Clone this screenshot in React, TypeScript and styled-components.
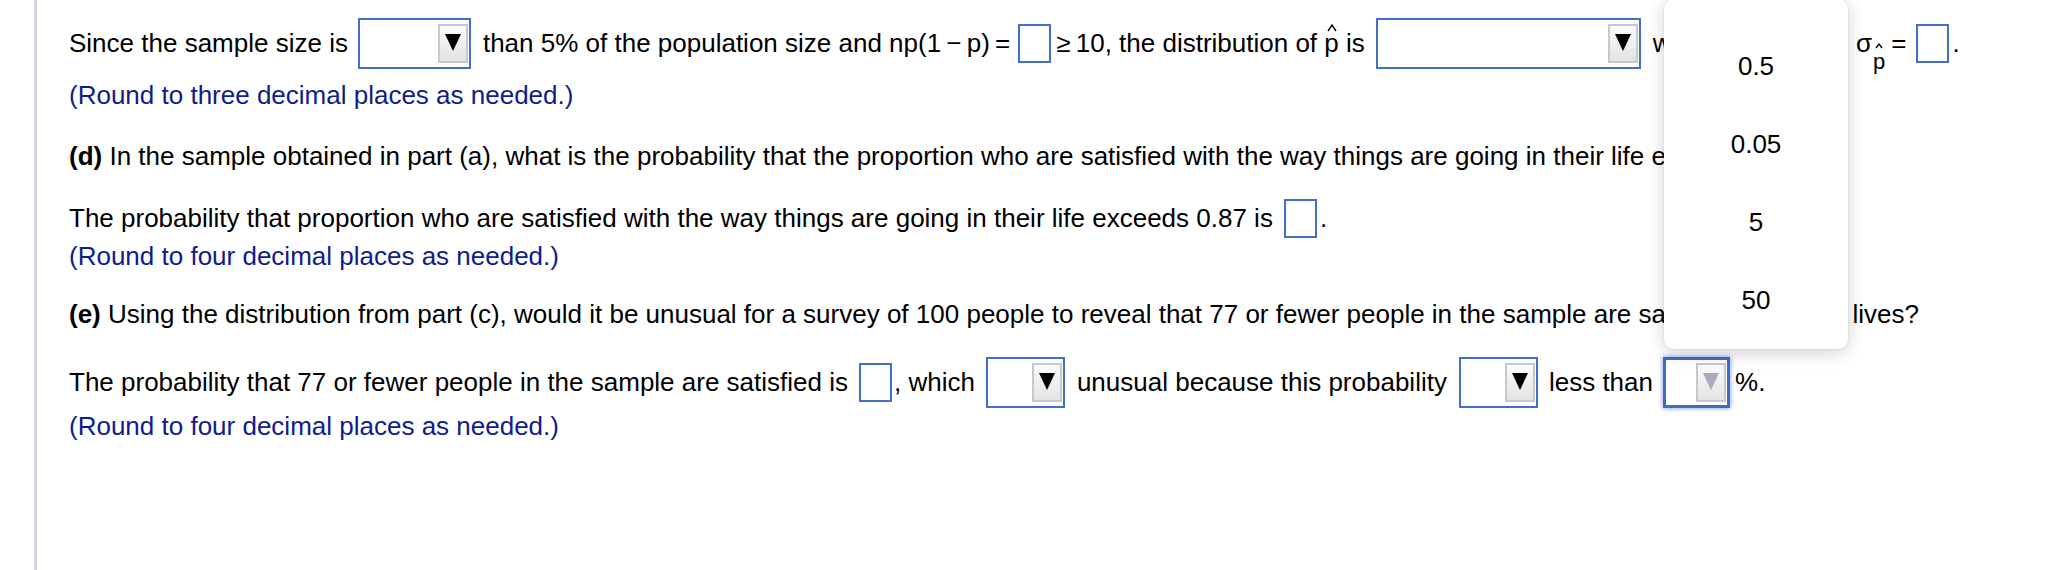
import * as React from 'react';
import styled, { createGlobalStyle } from 'styled-components';

const GlobalStyle = createGlobalStyle`
	html, body { margin: 0; padding: 0; background: #fff; }
	body {
		font-family: "Liberation Sans", Arial, Helvetica, sans-serif;
		font-size: 26px;
		color: #000;
	}
`;

const Page = styled.div`
	width: 2070px;
	height: 570px;
	overflow: hidden;
	padding-left: 34px;
	box-sizing: border-box;
`;

const Panel = styled.div`
	height: 100%;
	border-left: 3px solid #cfd3e2;
	padding: 18px 0 0 32px;
	box-sizing: border-box;
`;

const Row = styled.div<{ $mt: number; $h: number }>`
	display: flex;
	align-items: center;
	height: ${(p) => p.$h}px;
	margin-top: ${(p) => p.$mt}px;
	white-space: nowrap;
`;

const Line = styled.div<{ $mt: number }>`
	line-height: 30px;
	margin-top: ${(p) => p.$mt}px;
	white-space: nowrap;
`;

const Hint = styled(Line)`
	color: #0f1c8c;
`;

const Txt = styled.span``;

const Part = styled.b`
	font-weight: bold;
`;

const Box = styled.span<{ $ml: number; $mr: number }>`
	display: inline-block;
	flex: none;
	width: 33px;
	height: 39px;
	box-sizing: border-box;
	border: 2px solid #4270c8;
	margin: 0 ${(p) => p.$mr}px 0 ${(p) => p.$ml}px;
`;

const SelectBox = styled.span<{ $w: number; $ml: number; $mr: number; $focus?: boolean }>`
	position: relative;
	display: inline-flex;
	flex: none;
	align-items: center;
	justify-content: flex-end;
	box-sizing: border-box;
	width: ${(p) => p.$w}px;
	height: 51px;
	padding-right: 1px;
	background: #fff;
	border: ${(p) => (p.$focus ? '3px solid #3f6bc6' : '2px solid #4270c8')};
	box-shadow: ${(p) => (p.$focus ? '0 0 5px rgba(70, 110, 210, 0.75)' : 'none')};
	margin: 0 ${(p) => p.$mr}px 0 ${(p) => p.$ml}px;
`;

const SelectBtn = styled.span`
	display: flex;
	align-items: center;
	justify-content: center;
	width: 30px;
	height: 39px;
	box-sizing: border-box;
	border: 2px solid #c8c8c8;
	background: linear-gradient(#fbfbfb, #e3e3e3);
`;

const Arrow = styled.span<{ $dim?: boolean }>`
	width: 0;
	height: 0;
	margin-top: -3px;
	border-left: 8px solid transparent;
	border-right: 8px solid transparent;
	border-top: 17px solid ${(p) => (p.$dim ? '#a6abbf' : '#000')};
`;

const Popup = styled.div`
	position: absolute;
	left: -2px;
	bottom: calc(100% + 11px);
	width: 184px;
	padding: 28px 0 10px;
	background: #fff;
	border-radius: 10px;
	box-shadow: 0 4px 18px rgba(0, 0, 0, 0.18), 0 0 3px rgba(0, 0, 0, 0.08);
	z-index: 5;
`;

const Option = styled.div`
	display: flex;
	align-items: center;
	justify-content: center;
	height: 78px;
	font-size: 26px;
	color: #000;
`;

const Hidden = styled.span<{ $w: number }>`
	display: inline-block;
	flex: none;
	width: ${(p) => p.$w}px;
`;

const PHat = styled.span`
	position: relative;
	display: inline-block;
	svg {
		position: absolute;
		left: 50%;
		top: -4px;
		transform: translateX(-50%);
	}
`;

const SigmaGroup = styled.span`
	display: flex;
	align-self: stretch;
	align-items: flex-start;
`;

const Sigma = styled.span`
	margin-top: 11px;
	line-height: 29px;
`;

const SubStack = styled.span`
	display: flex;
	flex-direction: column;
	align-items: center;
	margin: 25px 0 0 1px;
	font-size: 22px;
	line-height: 22px;
	svg {
		margin-bottom: 2px;
	}
`;

const Eq = styled.span`
	margin: 11px 0 0 6px;
	line-height: 29px;
`;

const Hat = ({ w = 10, h = 8 }: { w?: number; h?: number }) => (
	<svg width={w} height={h} viewBox={`0 0 ${w} ${h}`}>
		<polyline
			points={`1,${h - 1} ${w / 2},1 ${w - 1},${h - 1}`}
			fill="none"
			stroke="#000"
			strokeWidth="1.4"
		/>
	</svg>
);

interface ISelectProps {
	w: number;
	ml: number;
	mr: number;
	focus?: boolean;
	children?: React.ReactNode;
}

const Select = ({ w, ml, mr, focus, children }: ISelectProps) => (
	<SelectBox $w={w} $ml={ml} $mr={mr} $focus={focus}>
		<SelectBtn>
			<Arrow $dim={focus} />
		</SelectBtn>
		{children}
	</SelectBox>
);

const options = ['0.5', '0.05', '5', '50'];

const App = () => (
	<Page>
		<GlobalStyle />
		<Panel>
			<Row $mt={0} $h={51}>
				<Txt>Since the sample size is</Txt>
				<Select w={113} ml={10} mr={12} />
				<Txt>than 5% of the population size and np(1&#8201;&minus;&#8201;p)&#8201;=</Txt>
				<Box $ml={8} $mr={5} />
				<Txt>
					&ge;&#8201;10, the distribution of{' '}
					<PHat>
						<Hat />p
					</PHat>{' '}
					is
				</Txt>
				<Select w={265} ml={11} mr={12} />
				<Txt>with</Txt>
				<Hidden $w={157} />
				<SigmaGroup>
					<Sigma>&sigma;</Sigma>
					<SubStack>
						<Hat w={8} h={6} />p
					</SubStack>
					<Eq>=</Eq>
				</SigmaGroup>
				<Box $ml={9} $mr={4} />
				<Txt>.</Txt>
			</Row>
			<Hint $mt={11}>(Round to three decimal places as needed.)</Hint>
			<Line $mt={31}>
				<Part>(d)</Part> In the sample obtained in part (a), what is the probability that the proportion who
				are satisfied with the way things are going in their life exceeds 0.87?
			</Line>
			<Row $mt={27} $h={40}>
				<Txt>
					The probability that proportion who are satisfied with the way things are going in their life
					exceeds 0.87 is
				</Txt>
				<Box $ml={11} $mr={3} />
				<Txt>.</Txt>
			</Row>
			<Hint $mt={3}>(Round to four decimal places as needed.)</Hint>
			<Line $mt={28}>
				<Part>(e)</Part> Using the distribution from part (c), would it be unusual for a survey of 100 people to
				reveal that 77 or fewer people in the sample are satisfied with their lives?
			</Line>
			<Row $mt={28} $h={51}>
				<Txt>The probability that 77 or fewer people in the sample are satisfied is</Txt>
				<Box $ml={11} $mr={2} />
				<Txt>, which</Txt>
				<Select w={79} ml={11} mr={12} />
				<Txt>unusual because this probability</Txt>
				<Select w={79} ml={12} mr={11} />
				<Txt>less than</Txt>
				<Select w={67} ml={10} mr={5} focus>
					<Popup>
						{options.map((o) => (
							<Option key={o}>{o}</Option>
						))}
					</Popup>
				</Select>
				<Txt>%.</Txt>
			</Row>
			<Hint $mt={3}>(Round to four decimal places as needed.)</Hint>
		</Panel>
	</Page>
);

export default App;
